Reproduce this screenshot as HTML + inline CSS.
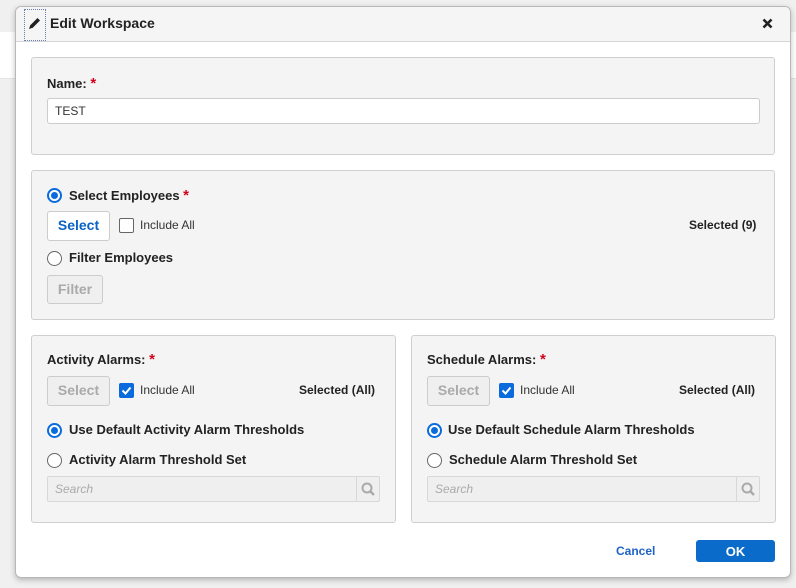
<!DOCTYPE html>
<html><head><meta charset="utf-8"><style>
*{box-sizing:border-box;margin:0;padding:0}
body{width:796px;height:588px;background:#f0f0f0;font-family:"Liberation Sans",Arial,sans-serif;position:relative;overflow:hidden;color:#222}
.strip{position:absolute;left:0;top:32px;width:796px;height:47px;background:#fff;border-bottom:1px solid #e4e4e4}
.dlg{position:absolute;left:15px;top:6px;width:776px;height:572px;background:#fff;border:1px solid #b8b8b8;border-radius:6px;box-shadow:0 2px 6px rgba(0,0,0,.25);overflow:hidden}
.hdr{position:absolute;left:0;top:0;width:100%;height:35px;background:#f5f5f5;border-bottom:1px solid #d6d6d6}
.a{position:absolute}
.pn{position:absolute;background:#f4f4f4;border:1px solid #cfcfcf;border-radius:3px}
.lb{font-size:13px;font-weight:bold;color:#222;white-space:nowrap}
.st{color:#d0021b;font-size:15px}
.btn{position:absolute;border:1px solid #ccc;border-radius:3px;font-size:14px;font-weight:bold;text-align:center;background:#efefef;color:#aaa}
.sm{font-size:12px;color:#333;white-space:nowrap}
.rad{position:absolute;width:15px;height:15px;border-radius:50%;border:1px solid #666;background:#fff}
.rad.on{border:2px solid #0a6bdc}
.rad.on:after{content:"";position:absolute;left:2px;top:2px;width:7px;height:7px;border-radius:50%;background:#0a6bdc}
.cb{position:absolute;width:15px;height:15px;border-radius:2px;border:1px solid #666;background:#fff}
.cb.on{background:#0a6bdc;border-color:#0a6bdc}
.srch{position:absolute;height:26px;border:1px solid #d8d8d8;border-radius:2px;background:#efefef}
.srch span{position:absolute;left:7px;top:5px;font-size:12px;font-style:italic;color:#aaa}
.srch i{position:absolute;right:0;top:0;width:23px;height:24px;border-left:1px solid #d8d8d8}
</style></head><body>
<div class="strip"></div>
<div class="dlg">
 <div class="hdr" style="height:35px">
  <div class="a" style="left:8px;top:2px;width:22px;height:32px;border:1px dotted #6a7db0"></div>
  <svg class="a" style="left:12px;top:9px" width="14" height="14" viewBox="0 0 14 14"><path d="M2 9.5L9.5 2l2.5 2.5L4.5 12H2z" fill="#222"/><path d="M1 13l1-3 2 2z" fill="#222"/></svg>
  <div class="a lb" style="left:34px;top:8px;font-size:14px">Edit Workspace</div>
  <svg class="a" style="left:746px;top:11px" width="11" height="11" viewBox="0 0 11 11"><path d="M1.5 1.5l8 8M9.5 1.5l-8 8" stroke="#222" stroke-width="2.6"/></svg>
 </div>
 <!-- panel 1 -->
 <div class="pn" style="left:15px;top:50px;width:744px;height:98px">
  <div class="a lb" style="left:15px;top:17px">Name: <span class="st">*</span></div>
  <div class="a" style="left:15px;top:40px;width:713px;height:26px;background:#fff;border:1px solid #ccc;border-radius:3px;font-size:12px;padding:5px 7px;color:#333">TEST</div>
 </div>
 <!-- panel 2 -->
 <div class="pn" style="left:15px;top:163px;width:744px;height:150px">
  <div class="rad on" style="left:15px;top:17px"></div>
  <div class="a lb" style="left:37px;top:16px">Select Employees <span class="st">*</span></div>
  <div class="btn" style="left:15px;top:40px;width:63px;height:30px;background:#fff;color:#0a62c4;line-height:27px">Select</div>
  <div class="cb" style="left:87px;top:47px"></div>
  <div class="a sm" style="left:108px;top:47px">Include All</div>
  <div class="a sm" style="left:657px;top:47px;font-weight:bold;color:#222">Selected (9)</div>
  <div class="rad" style="left:15px;top:80px"></div>
  <div class="a lb" style="left:37px;top:79px">Filter Employees</div>
  <div class="btn" style="left:15px;top:104px;width:56px;height:29px;line-height:26px">Filter</div>
 </div>
 <!-- panel 3 -->
 <div class="pn" style="left:15px;top:328px;width:365px;height:188px">
  <div class="a lb" style="left:15px;top:15px">Activity Alarms: <span class="st">*</span></div>
  <div class="btn" style="left:15px;top:40px;width:63px;height:30px;line-height:27px">Select</div>
  <div class="cb on" style="left:87px;top:47px"><svg width="13" height="13" viewBox="0 0 13 13"><path d="M2.5 6.5l3 3 5-6" stroke="#fff" stroke-width="2" fill="none"/></svg></div>
  <div class="a sm" style="left:108px;top:47px">Include All</div>
  <div class="a sm" style="left:267px;top:47px;font-weight:bold;color:#222">Selected (All)</div>
  <div class="rad on" style="left:15px;top:87px"></div>
  <div class="a lb" style="left:37px;top:86px">Use Default Activity Alarm Thresholds</div>
  <div class="rad" style="left:15px;top:117px"></div>
  <div class="a lb" style="left:37px;top:116px">Activity Alarm Threshold Set</div>
  <div class="srch" style="left:15px;top:140px;width:333px"><span>Search</span><i><svg width="22" height="24" viewBox="0 0 22 24"><circle cx="10" cy="11" r="4.5" stroke="#aaa" stroke-width="2" fill="none"/><path d="M13.5 14.5l3.5 3.5" stroke="#aaa" stroke-width="2.4"/></svg></i></div>
 </div>
 <!-- panel 4 -->
 <div class="pn" style="left:395px;top:328px;width:365px;height:188px">
  <div class="a lb" style="left:15px;top:15px">Schedule Alarms: <span class="st">*</span></div>
  <div class="btn" style="left:15px;top:40px;width:63px;height:30px;line-height:27px">Select</div>
  <div class="cb on" style="left:87px;top:47px"><svg width="13" height="13" viewBox="0 0 13 13"><path d="M2.5 6.5l3 3 5-6" stroke="#fff" stroke-width="2" fill="none"/></svg></div>
  <div class="a sm" style="left:108px;top:47px">Include All</div>
  <div class="a sm" style="left:267px;top:47px;font-weight:bold;color:#222">Selected (All)</div>
  <div class="rad on" style="left:15px;top:87px"></div>
  <div class="a lb" style="left:36px;top:86px">Use Default Schedule Alarm Thresholds</div>
  <div class="rad" style="left:15px;top:117px"></div>
  <div class="a lb" style="left:37px;top:116px">Schedule Alarm Threshold Set</div>
  <div class="srch" style="left:15px;top:140px;width:333px"><span>Search</span><i><svg width="22" height="24" viewBox="0 0 22 24"><circle cx="10" cy="11" r="4.5" stroke="#aaa" stroke-width="2" fill="none"/><path d="M13.5 14.5l3.5 3.5" stroke="#aaa" stroke-width="2.4"/></svg></i></div>
 </div>
 <div class="a" style="left:600px;top:537px;font-size:12px;font-weight:bold;color:#1f63c6">Cancel</div>
 <div class="a" style="left:680px;top:533px;width:79px;height:22px;background:#0a6bcb;border-radius:3px;color:#fff;font-size:13px;font-weight:bold;text-align:center;line-height:23px">OK</div>
</div>
</body></html>
